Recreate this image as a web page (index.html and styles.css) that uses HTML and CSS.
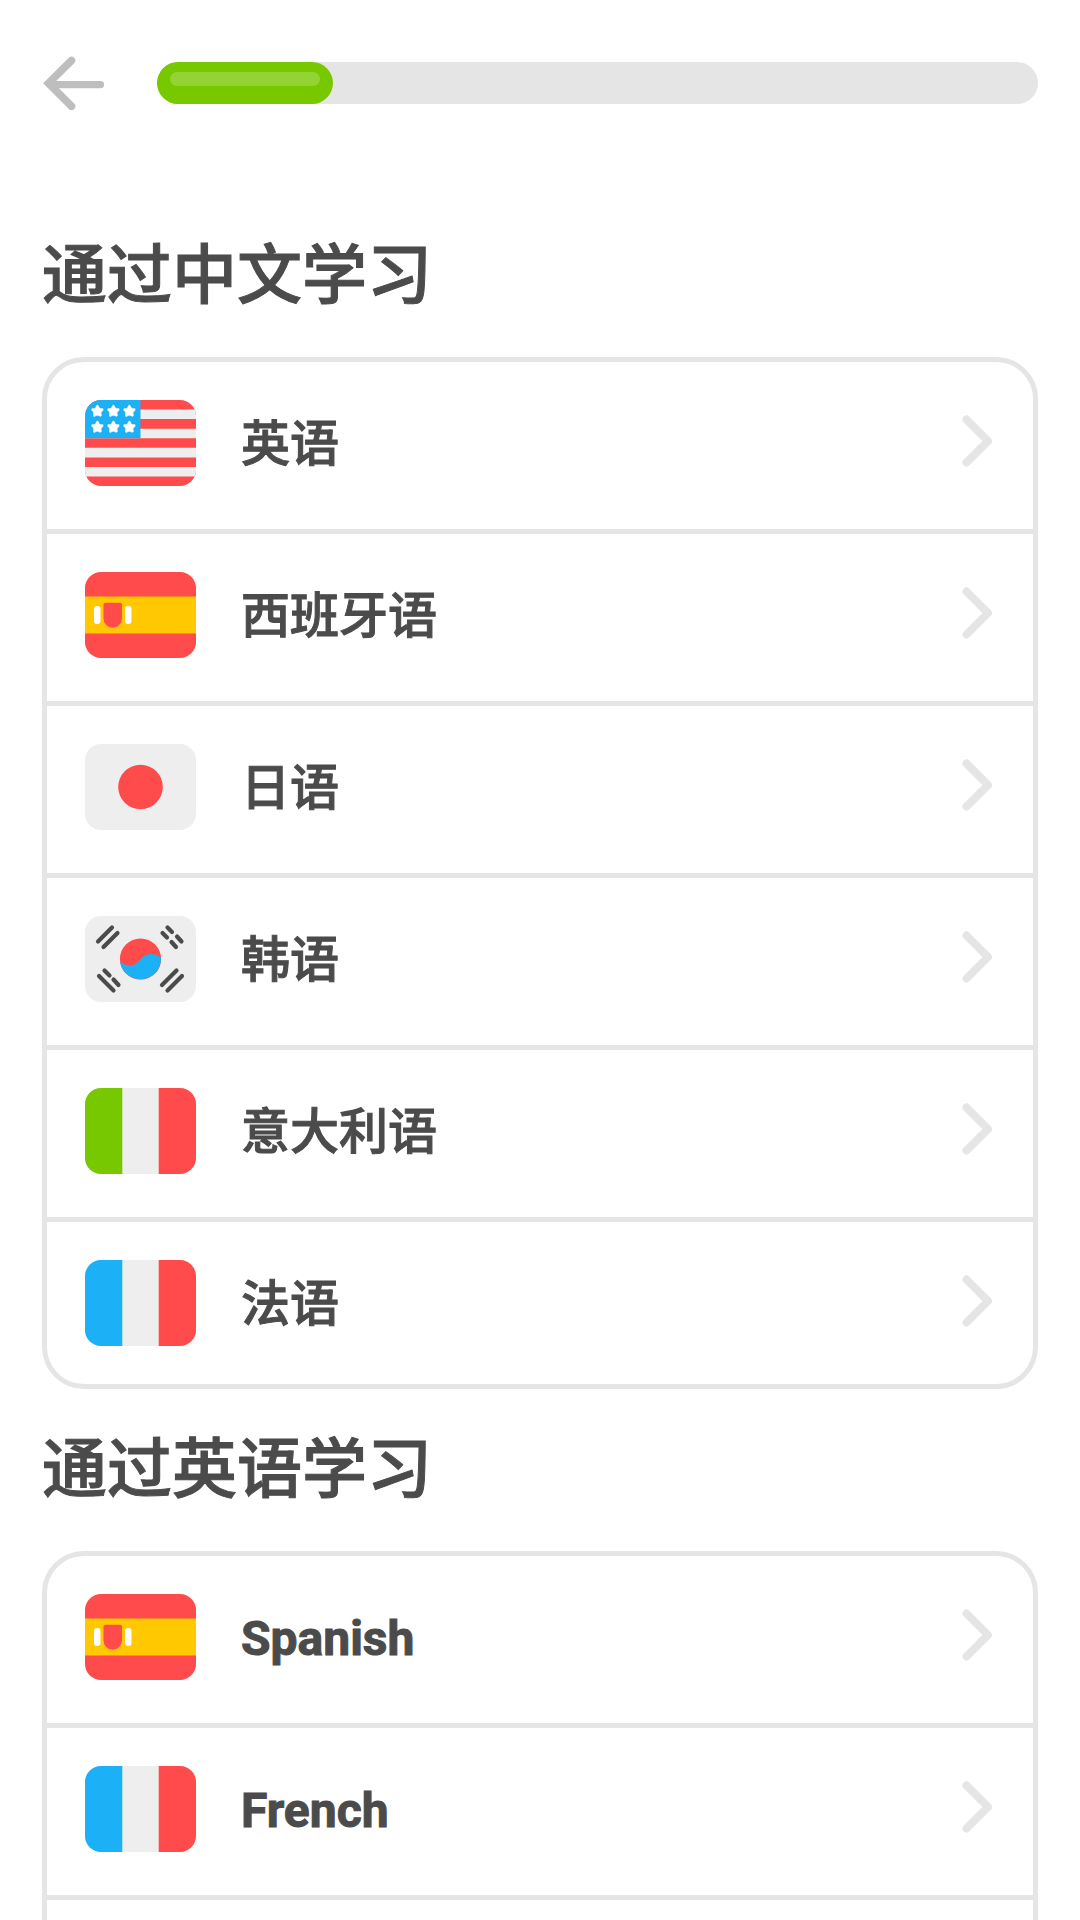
FILE: index.html
```html
<!DOCTYPE html>
<html lang="zh-CN">
<head>
    <meta charset="UTF-8">
    <meta name="viewport" content="width=device-width, initial-scale=1.0">
    <title>选择课程</title>
    <link rel="stylesheet" href="styles.css">
</head>
<body>
    <!-- Shared icons -->
    <svg class="sprite" aria-hidden="true">
        <symbol id="chevron" viewBox="0 0 36 60">
            <path d="M7.5 6.5L29 28L7.5 49.5" fill="none" stroke="#e5e5e5" stroke-width="8" stroke-linecap="round" stroke-linejoin="round"/>
        </symbol>
        <symbol id="star" viewBox="-7 -7 14 14">
            <path d="M0 -4.8L1.5 -1.7L4.8 -1.4L2.4 1L3 4.3L0 2.8L-3 4.3L-2.4 1L-4.8 -1.4L-1.5 -1.7Z" fill="#fff" stroke="#fff" stroke-width="2.6" stroke-linejoin="round"/>
        </symbol>
        <symbol id="flag-us" viewBox="0 0 111 86">
            <rect width="111" height="86" fill="#ff4b4b"/>
            <path d="M0 14.3H111M0 33.5H111M0 52.6H111M0 71.8H111" stroke="#eee" stroke-width="9.6"/>
            <rect width="55.5" height="38.2" fill="#1cb0f6"/>
            <use href="#star" x="5.4" y="4" width="14" height="14"/>
            <use href="#star" x="21.4" y="4" width="14" height="14"/>
            <use href="#star" x="37.4" y="4" width="14" height="14"/>
            <use href="#star" x="5.4" y="20" width="14" height="14"/>
            <use href="#star" x="21.4" y="20" width="14" height="14"/>
            <use href="#star" x="37.4" y="20" width="14" height="14"/>
        </symbol>
        <symbol id="flag-es" viewBox="0 0 111 86">
            <rect width="111" height="86" fill="#ff4b4b"/>
            <rect y="24.5" width="111" height="37" fill="#ffc800"/>
            <rect x="9" y="34" width="6.5" height="18" rx="3" fill="#fff"/>
            <rect x="40" y="34" width="6.5" height="18" rx="3" fill="#fff"/>
            <path d="M20.5 30.8H35Q37 30.8 37 32.8V46.5A9.2 9.2 0 0 1 18.5 46.5V32.8Q18.5 30.8 20.5 30.8Z" fill="#ff4b4b"/>
        </symbol>
        <symbol id="flag-jp" viewBox="0 0 111 86">
            <rect width="111" height="86" fill="#eee"/>
            <circle cx="55.5" cy="43" r="22.3" fill="#ff4b4b"/>
        </symbol>
        <symbol id="flag-kr" viewBox="0 0 111 86">
            <rect width="111" height="86" fill="#eee"/>
            <circle cx="55.5" cy="43" r="20.6" fill="#ff4b4b"/>
            <path d="M35 45.4C39 49 43 50.2 47 49.2C54 47.4 56 40 63 38.4C68 37.3 72 38.6 76 42A20.6 20.6 0 0 1 35 45.4Z" fill="#1cb0f6"/>
            <path d="M13 25.5L27 11.5M18.5 31L32.5 17M82.5 11.5L87 16M92 20.5L96.5 25.5M77.5 17L82 21.5M86.5 26L91 31M19.5 54.5L24.5 59.5M28.5 63.5L33.5 69M14 60L28.5 74.5M91.5 54.5L77 69M97 60L82.5 74.5" fill="none" stroke="#4b4b4b" stroke-width="4.2" stroke-linecap="round"/>
        </symbol>
        <symbol id="flag-it" viewBox="0 0 111 86">
            <rect width="111" height="86" fill="#eee"/>
            <rect width="37.3" height="86" fill="#78c800"/>
            <rect x="73.7" width="37.3" height="86" fill="#ff4b4b"/>
        </symbol>
        <symbol id="flag-fr" viewBox="0 0 111 86">
            <rect width="111" height="86" fill="#eee"/>
            <rect width="37.3" height="86" fill="#1cb0f6"/>
            <rect x="73.7" width="37.3" height="86" fill="#ff4b4b"/>
        </symbol>
    </svg>

    <div class="screen">
        <header class="top-bar">
            <button class="back-btn" type="button" aria-label="返回">
                <svg class="back-icon" viewBox="0 0 62 54">
                    <path d="M29.5 4.5L6.5 27.3L29.5 50.2" fill="none" stroke="#bebebe" stroke-width="7.6" stroke-linecap="round"/>
                    <path d="M8 28.6H58.5" stroke="#bebebe" stroke-width="7.4" stroke-linecap="round"/>
                </svg>
            </button>
            <div class="progress" role="progressbar" aria-label="进度" aria-valuemin="0" aria-valuemax="100" aria-valuenow="20">
                <div class="progress-fill" style="width: 20%">
                    <div class="progress-shine"></div>
                </div>
            </div>
        </header>

        <main>
            <!-- Courses taught in Chinese -->
            <section>
                <h2 class="section-title">通过中文学习</h2>
                <ul class="course-list">
                    <li class="course-item">
                        <button class="course-btn" type="button">
                            <svg class="flag" aria-hidden="true"><use href="#flag-us"/></svg>
                            <span class="course-name">英语</span>
                            <svg class="chevron" aria-hidden="true"><use href="#chevron"/></svg>
                        </button>
                    </li>
                    <li class="course-item">
                        <button class="course-btn" type="button">
                            <svg class="flag" aria-hidden="true"><use href="#flag-es"/></svg>
                            <span class="course-name">西班牙语</span>
                            <svg class="chevron" aria-hidden="true"><use href="#chevron"/></svg>
                        </button>
                    </li>
                    <li class="course-item">
                        <button class="course-btn" type="button">
                            <svg class="flag" aria-hidden="true"><use href="#flag-jp"/></svg>
                            <span class="course-name">日语</span>
                            <svg class="chevron" aria-hidden="true"><use href="#chevron"/></svg>
                        </button>
                    </li>
                    <li class="course-item">
                        <button class="course-btn" type="button">
                            <svg class="flag" aria-hidden="true"><use href="#flag-kr"/></svg>
                            <span class="course-name">韩语</span>
                            <svg class="chevron" aria-hidden="true"><use href="#chevron"/></svg>
                        </button>
                    </li>
                    <li class="course-item">
                        <button class="course-btn" type="button">
                            <svg class="flag" aria-hidden="true"><use href="#flag-it"/></svg>
                            <span class="course-name">意大利语</span>
                            <svg class="chevron" aria-hidden="true"><use href="#chevron"/></svg>
                        </button>
                    </li>
                    <li class="course-item">
                        <button class="course-btn" type="button">
                            <svg class="flag" aria-hidden="true"><use href="#flag-fr"/></svg>
                            <span class="course-name">法语</span>
                            <svg class="chevron" aria-hidden="true"><use href="#chevron"/></svg>
                        </button>
                    </li>
                </ul>
            </section>

            <!-- Courses taught in English -->
            <section>
                <h2 class="section-title">通过英语学习</h2>
                <ul class="course-list">
                    <li class="course-item">
                        <button class="course-btn" type="button">
                            <svg class="flag" aria-hidden="true"><use href="#flag-es"/></svg>
                            <span class="course-name latin" lang="en">Spanish</span>
                            <svg class="chevron" aria-hidden="true"><use href="#chevron"/></svg>
                        </button>
                    </li>
                    <li class="course-item">
                        <button class="course-btn" type="button">
                            <svg class="flag" aria-hidden="true"><use href="#flag-fr"/></svg>
                            <span class="course-name latin" lang="en">French</span>
                            <svg class="chevron" aria-hidden="true"><use href="#chevron"/></svg>
                        </button>
                    </li>
                    <li class="course-item course-item-empty"></li>
                </ul>
            </section>
        </main>
    </div>
</body>
</html>
```
FILE: styles.css
```css
* {
    margin: 0;
    padding: 0;
    box-sizing: border-box;
}

body {
    font-family: "Noto Sans CJK SC", "Noto Sans", sans-serif;
    background: #fff;
    color: #4b4b4b;
}

.sprite {
    display: none;
}

.screen {
    height: 100vh;
    overflow: hidden;
    padding: 56px 42px 0;
}

/* Top bar */
.top-bar {
    display: flex;
    align-items: center;
    gap: 53px;
    margin-bottom: 85px;
}

.back-btn {
    border: none;
    background: none;
    cursor: pointer;
}

.back-icon {
    display: block;
    width: 62px;
    height: 54px;
}

.progress {
    flex: 1;
    height: 42px;
    border-radius: 21px;
    background: #e5e5e5;
}

.progress-fill {
    height: 100%;
    padding: 10px 13px;
    border-radius: 21px;
    background: #78c800;
}

.progress-shine {
    height: 14px;
    border-radius: 7px;
    background: #93d334;
}

/* Course lists */
.section-title {
    padding: 36px 0 48px;
    font-size: 65px;
    line-height: 78px;
    font-weight: 500;
    -webkit-text-stroke: 1px #4b4b4b;
}

.course-list {
    list-style: none;
    border: 5px solid #e5e5e5;
    border-radius: 42px;
}

.course-item {
    border-bottom: 5px solid #e5e5e5;
}

.course-btn {
    display: flex;
    align-items: center;
    width: 100%;
    padding: 38px 38px 43px;
    border: none;
    background: none;
    color: inherit;
    font: inherit;
    text-align: left;
    cursor: pointer;
}

.course-item:last-child {
    border-bottom: none;
}

.course-item:last-child .course-btn {
    padding-bottom: 38px;
}

.course-item-empty {
    height: 162px;
}

.flag {
    width: 111px;
    height: 86px;
    border-radius: 16px;
}

.course-name {
    flex: 1;
    margin-left: 45px;
    padding-bottom: 6px;
    font-size: 49px;
    line-height: 60px;
    font-weight: 500;
    -webkit-text-stroke: 1px #4b4b4b;
}

.latin {
    padding: 4px 0 0;
    font-family: Roboto, "Noto Sans", sans-serif;
    font-size: 48px;
    font-weight: 700;
}

.chevron {
    width: 36px;
    height: 60px;
}
```
